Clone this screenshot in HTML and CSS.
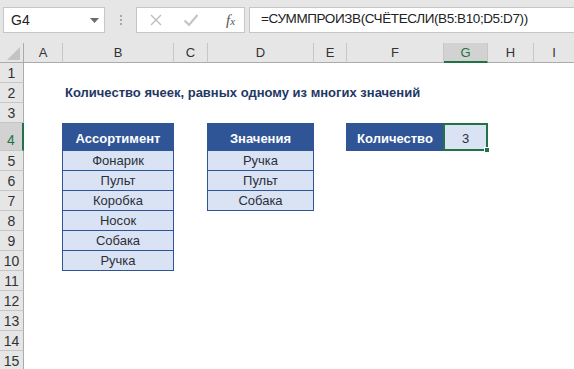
FILE: index.html
```html
<!DOCTYPE html>
<html lang="ru">
<head>
  <meta charset="UTF-8">
  <title>Количество ячеек</title>
  <link rel="stylesheet" href="styles.css">
</head>
<body>
  <div class="toolbar">
    <div class="name-box">
      <span>G4</span>
      <svg class="drop" width="9" height="5" viewBox="0 0 9 5"><path d="M0 0h9L4.5 5z" fill="#6b6b6b"/></svg>
    </div>
    <div class="grip"><i></i><i></i><i></i></div>
    <div class="fx-buttons">
      <svg width="14" height="14" viewBox="0 0 14 14"><path d="M2 2l10 10M12 2L2 12" stroke="#bdbdbd" stroke-width="1.4"/></svg>
      <svg width="16" height="14" viewBox="0 0 16 14"><path d="M1.5 7.5l4.5 4.5L14.5 2" stroke="#c4c4c4" stroke-width="2.2" fill="none"/></svg>
      <span class="fx">f<sub>x</sub></span>
    </div>
    <div class="formula">=СУММПРОИЗВ(СЧЁТЕСЛИ(B5:B10;D5:D7))</div>
  </div>

  <div class="sheet">
    <div class="corner"><svg width="13" height="13" viewBox="0 0 13 13"><path d="M13 0v13H0z" fill="#c3c3c3"/></svg></div>
    <div class="col-head">A</div>
    <div class="col-head">B</div>
    <div class="col-head">C</div>
    <div class="col-head">D</div>
    <div class="col-head">E</div>
    <div class="col-head">F</div>
    <div class="col-head active">G</div>
    <div class="col-head">H</div>
    <div class="col-head last">I</div>

    <div class="row-head r1">1</div>
    <div class="row-head r2">2</div>
    <div class="row-head r3">3</div>
    <div class="row-head r4 active">4</div>
    <div class="row-head r5">5</div>
    <div class="row-head r6">6</div>
    <div class="row-head r7">7</div>
    <div class="row-head r8">8</div>
    <div class="row-head r9">9</div>
    <div class="row-head r10">10</div>
    <div class="row-head r11">11</div>
    <div class="row-head r12">12</div>
    <div class="row-head r13">13</div>
    <div class="row-head r14">14</div>
    <div class="row-head r15">15</div>

    <div class="title">Количество ячеек, равных одному из многих значений</div>

    <div class="th col-b r4">Ассортимент</div>
    <div class="td col-b r5">Фонарик</div>
    <div class="td col-b r6">Пульт</div>
    <div class="td col-b r7">Коробка</div>
    <div class="td col-b r8">Носок</div>
    <div class="td col-b r9">Собака</div>
    <div class="td col-b r10">Ручка</div>

    <div class="th col-d r4">Значения</div>
    <div class="td col-d r5">Ручка</div>
    <div class="td col-d r6">Пульт</div>
    <div class="td col-d r7">Собака</div>

    <div class="th col-f r4">Количество</div>
    <div class="result col-g r4">3<span class="handle"></span></div>
  </div>
</body>
</html>
```

FILE: styles.css
```css
* {
  box-sizing: border-box;
  margin: 0;
  padding: 0;
}

body {
  width: 574px;
  height: 369px;
  overflow: hidden;
  background: #fff;
  font-family: 'Liberation Sans', Arial, sans-serif;
}

/* formula bar */
.toolbar {
  height: 43px;
  background: #e6e6e6;
  display: flex;
  align-items: flex-start;
  padding: 7px 0 0 3px;
}

.name-box {
  width: 102px;
  height: 26px;
  background: #fff;
  border: 1px solid #c6c6c6;
  display: flex;
  align-items: center;
  justify-content: space-between;
  padding: 0 5px 0 7px;
  font-size: 14px;
  color: #222;
}

.grip {
  width: 31px;
  height: 26px;
  display: flex;
  flex-direction: column;
  align-items: center;
  justify-content: center;
  gap: 2px;
}

.grip i {
  width: 2px;
  height: 2px;
  background: #a8a8a8;
}

.fx-buttons {
  width: 109px;
  height: 26px;
  background: #fff;
  border: 1px solid #c6c6c6;
  display: flex;
  align-items: center;
  padding: 0 0 0 12px;
  gap: 20px;
}

.fx {
  font-family: 'Liberation Serif', serif;
  font-style: italic;
  font-size: 15px;
  color: #555;
  margin-left: 7px;
}

.fx sub {
  font-size: 11px;
  vertical-align: 0;
}

.formula {
  flex: 1;
  height: 26px;
  margin-left: 4px;
  background: #fff;
  border: 1px solid #c6c6c6;
  border-right: none;
  padding: 3px 0 0 11px;
  font-size: 13.5px;
  letter-spacing: -0.4px;
  color: #222;
  white-space: nowrap;
}

/* sheet grid */
.sheet {
  display: grid;
  grid-template-columns: 24px 39px 111px 34px 106px 33px 97px 44px 46px 1fr;
  grid-template-rows: 20px 20px 20px 20px 28px repeat(11, 20px);
}

.corner,
.col-head {
  background: #e6e6e6;
  border-right: 1px solid #c6c6c6;
  border-bottom: 1px solid #ababab;
  font-size: 13px;
  color: #333;
  display: flex;
  align-items: center;
  justify-content: center;
}

.corner {
  align-items: flex-end;
  justify-content: flex-end;
  padding: 0 3px 2px 0;
  border-right-color: #ababab;
}

.col-head.active {
  background: #d2d2d2;
  color: #217346;
  border-bottom: 2px solid #217346;
}

.col-head.last {
  border-right: none;
}

.row-head {
  grid-column: 1;
  background: #e6e6e6;
  border-right: 1px solid #ababab;
  border-bottom: 1px solid #c6c6c6;
  font-size: 14px;
  color: #333;
  display: flex;
  align-items: center;
  justify-content: center;
}

.row-head.active {
  background: #d2d2d2;
  color: #217346;
  border-right: 2px solid #217346;
  align-items: flex-end;
  padding-bottom: 2px;
}

.r1 { grid-row: 2; }
.r2 { grid-row: 3; }
.r3 { grid-row: 4; }
.r4 { grid-row: 5; }
.r5 { grid-row: 6; }
.r6 { grid-row: 7; }
.r7 { grid-row: 8; }
.r8 { grid-row: 9; }
.r9 { grid-row: 10; }
.r10 { grid-row: 11; }
.r11 { grid-row: 12; }
.r12 { grid-row: 13; }
.r13 { grid-row: 14; }
.r14 { grid-row: 15; }
.r15 { grid-row: 16; }

.col-b { grid-column: 3; }
.col-d { grid-column: 5; }
.col-f { grid-column: 7; }
.col-g { grid-column: 8; }

.title {
  grid-column: 3 / 10;
  grid-row: 3;
  font-size: 13px;
  font-weight: bold;
  color: #1f3864;
  display: flex;
  align-items: flex-end;
  padding: 0 0 3px 2px;
  white-space: nowrap;
}

.th,
.td,
.result {
  display: flex;
  align-items: center;
  justify-content: center;
  font-size: 13px;
  margin-left: -1px;
}

.th {
  background: #2f5597;
  color: #fff;
  font-weight: bold;
  padding-top: 3px;
}

.td {
  background: #dae3f3;
  color: #2b2f3a;
  border: 1px solid #2f5597;
  border-top: none;
}

.result {
  position: relative;
  background: #dae3f3;
  color: #2b2f3a;
  border: 2px solid #217346;
  padding-top: 3px;
}

.handle {
  position: absolute;
  right: -4px;
  bottom: -4px;
  width: 6px;
  height: 6px;
  background: #217346;
  border: 1px solid #fff;
}
```
